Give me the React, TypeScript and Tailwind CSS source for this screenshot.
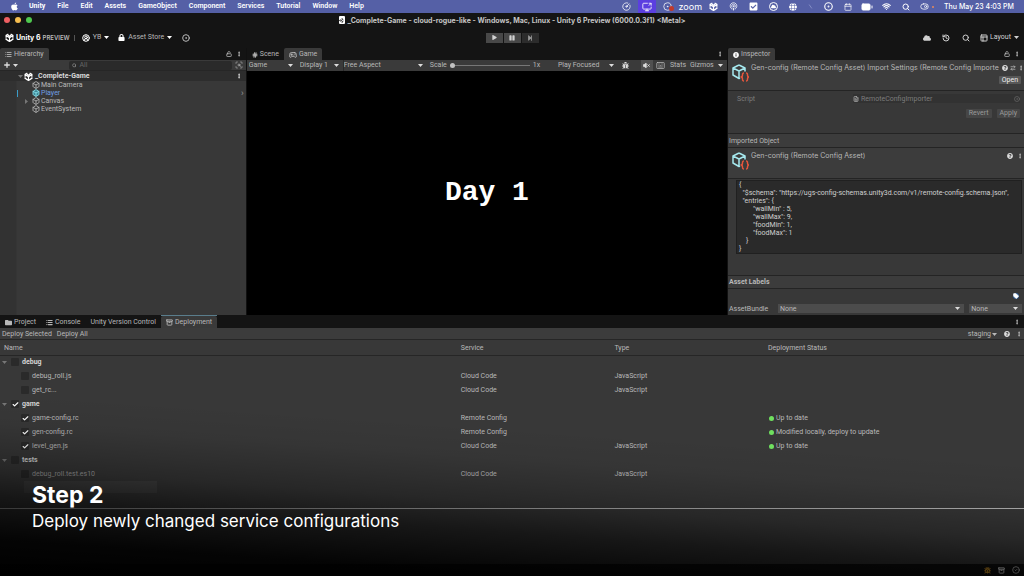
import React, { useState } from 'react';
import {
    Archive, BatteryMedium, Box, Bug, Calendar, Check, CircleDot, CircleUserRound, CircleCheck,
    CircleGauge, EllipsisVertical, FileText, Gamepad2, Hash, History, Keyboard,
    List, LockOpen, PanelsTopLeft, Plus, Podcast, ScanSearch, ScreenShare, Search, ArrowRightLeft,
    Tag, ToggleRight, VolumeX, Wifi,
} from 'lucide-react';
import { FaApple, FaUnity, FaCloud, FaGlobe, FaFolder, FaLock, FaPlay, FaPause, FaStepForward, FaBug, FaExclamationCircle, FaQuestionCircle, FaCheckSquare } from 'react-icons/fa';

const MENUS = ['File', 'Edit', 'Assets', 'GameObject', 'Component', 'Services', 'Tutorial', 'Window', 'Help'];

const CONFIG_JSON = `{
  "$schema": "https://ugs-config-schemas.unity3d.com/v1/remote-config.schema.json",
  "entries": {
        "wallMin" : 5,
        "wallMax": 9,
        "foodMin": 1,
        "foodMax": 1
    }
}`;

interface DeployItem {
    name: string;
    service: string;
    type?: string;
    status?: string;
    checked?: boolean;
    dim?: boolean;
}

interface DeployGroup {
    name: string;
    checked?: boolean;
    items: DeployItem[];
}

const GROUPS: DeployGroup[] = [
    {
        name: 'debug',
        items: [
            { name: 'debug_roll.js', service: 'Cloud Code', type: 'JavaScript' },
            { name: 'get_rc...', service: 'Cloud Code', type: 'JavaScript' },
        ],
    },
    {
        name: 'game',
        checked: true,
        items: [
            { name: 'game-config.rc', service: 'Remote Config', status: 'Up to date', checked: true },
            { name: 'gen-config.rc', service: 'Remote Config', status: 'Modified locally, deploy to update', checked: true },
            { name: 'level_gen.js', service: 'Cloud Code', type: 'JavaScript', status: 'Up to date', checked: true },
        ],
    },
    {
        name: 'tests',
        items: [{ name: 'debug_roll.test.es10', service: 'Cloud Code', type: 'JavaScript', dim: true }],
    },
];

const Caret: React.FC<{ className?: string }> = ({ className = '' }) => (
    <svg viewBox="0 0 10 6" className={`h-[3px] w-[5px] shrink-0 ${className}`} fill="currentColor" aria-hidden="true">
        <path d="M0 0h10L5 6z" />
    </svg>
);

const MoreButton: React.FC<{ label: string }> = ({ label }) => (
    <button aria-label={label} className="flex w-1.5 shrink-0 justify-center">
        <EllipsisVertical size={8} strokeWidth={4} />
    </button>
);

const DropDown: React.FC<{ label: string; value: string; className?: string }> = ({ label, value, className = '' }) => (
    <span className={`relative flex items-center ${className}`}>
        <select aria-label={label} className="h-full w-full appearance-none pr-2">
            <option>{value}</option>
        </select>
        <Caret className="pointer-events-none absolute right-1 text-[#ddd]" />
    </span>
);

const CheckBox: React.FC<{ id: string; label: string; initial?: boolean }> = ({ id, label, initial = false }) => {
    const [checked, setChecked] = useState(initial);
    return (
        <span className="relative h-2 w-2 shrink-0">
            <input
                id={id}
                type="checkbox"
                aria-label={label}
                checked={checked}
                onChange={() => setChecked(!checked)}
                className="block h-2 w-2 appearance-none rounded-[1px] bg-[#2a2a2a]"
            />
            {checked && <Check size={7} strokeWidth={4} className="pointer-events-none absolute left-px top-px text-white" />}
        </span>
    );
};

// Cube with braces, used for every remote config asset
const ConfigIcon: React.FC = () => (
    <svg viewBox="0 0 34 36" className="mt-1 h-[18px] w-[17px] shrink-0" fill="none" aria-hidden="true">
        <path d="M14 2 26 8v7M14 2 2 8v14l12 7 2-1M2 8l12 6 12-6M14 14v14" stroke="#a5e8ee" strokeWidth="3" strokeLinejoin="round" />
        <path d="M24 18c-3 0-3 1-3 4s0 3-2 4c2 1 2 1 2 4s0 4 3 4M28 18c3 0 3 1 3 4s0 3 2 4c-2 1-2 1-2 4s0 4-3 4" stroke="#e8563c" strokeWidth="3" />
    </svg>
);

// The Unity mark: a cube seen from its corner, with arrow-shaped gaps
const UnityMark: React.FC<{ className?: string }> = ({ className = '' }) => (
    <svg viewBox="0 0 24 24" className={`size-[9px] shrink-0 ${className}`} fill="none" stroke="currentColor" strokeWidth="3.4" aria-hidden="true">
        <path d="M9 3 3 6.500v6M15 3l6 3.500v6M6 19l6 3.500 6-3.500M12 12.500V21M12 12.500 4.500 8M12 12.500 19.500 8M8 6l4 2.500L16 6M3 14v3l4 2M21 14v3l-4 2" />
    </svg>
);

const MenuBar: React.FC = () => (
    <header className="flex h-[13px] items-center bg-[#5560a6] pl-[10px] pr-[10px] text-white">
        <FaApple size={9} />
        <nav className="ml-[10px] flex gap-3 font-semibold">
            <button className="font-bold">Unity</button>
            {MENUS.map(menu => <button key={menu}>{menu}</button>)}
        </nav>
        <div className="ml-auto flex items-center gap-[11px]">
            <CircleGauge size={9} />
            <span className="-mx-1 flex h-[13px] w-[18px] items-center justify-center bg-[#5b3fe0]"><ScreenShare size={10} /></span>
            <span className="relative">
                <CircleDot size={9} />
                <span className="absolute -right-0.5 bottom-0 h-[5px] w-[5px] rounded-full bg-[#c0392b]" />
            </span>
            <span className="-mx-1 font-[Inter,sans-serif] text-[9px]">zoom</span>
            <UnityMark />
            <Podcast size={9} />
            <FaCheckSquare size={9} />
            <span className="flex size-[9px] items-center justify-center rounded-full border border-white"><FaCloud size={5} /></span>
            <FaGlobe size={8} />
            <svg viewBox="0 0 9 9" className="size-[5px]" stroke="#a9b0dd" aria-hidden="true"><path d="m2 1 5 7" /></svg>
            <CircleDot size={9} strokeWidth={3} />
            <Calendar size={8} />
            <BatteryMedium size={12} fill="currentColor" className="-mx-0.5" />
            <Wifi size={9} strokeWidth={3} />
            <Search size={8} strokeWidth={3} />
            <span className="-mx-px flex items-center gap-[3px]">
                <ToggleRight size={9} />
                <span className="h-[2px] w-[2px] rounded-full bg-[#e88a5a]" />
            </span>
            <time className="font-[Inter,sans-serif] font-medium whitespace-nowrap">Thu May 23 4:03 PM</time>
        </div>
    </header>
);

const TitleBar: React.FC = () => (
    <div className="grid h-[14px] grid-cols-[1fr_auto_1fr] items-center px-1">
        <div className="flex gap-[5px]">
            <button aria-label="Close" className="size-1.5 rounded-full bg-[#ee5f62]" />
            <button aria-label="Minimize" className="size-1.5 rounded-full bg-[#f4bd4f]" />
            <button aria-label="Zoom" className="size-1.5 rounded-full bg-[#4fc94f]" />
        </div>
        <h1 className="flex items-center gap-[3px] font-[Inter,sans-serif] font-bold text-[#c4c4c4]">
            <span className="flex h-2 w-1.5 items-center justify-center rounded-[1px] bg-white text-black"><FaUnity size={5} /></span>
            _Complete-Game - cloud-rogue-like - Windows, Mac, Linux - Unity 6 Preview (6000.0.3f1) &lt;Metal&gt;
        </h1>
    </div>
);

const MainToolbar: React.FC = () => (
    <div className="grid h-[21px] grid-cols-[1fr_auto_1fr] items-center px-[5px]">
        <div className="flex items-center">
            <UnityMark className="text-white" />
            <span className="ml-[2px] font-[Inter,sans-serif] font-bold text-white">Unity 6</span>
            <span className="ml-[2px] font-[Inter,sans-serif] text-[6px] font-semibold">PREVIEW</span>
            <span className="ml-1 h-1.5 w-px bg-[#555]" />
            <button className="ml-[7px] flex items-center gap-[3px]">
                <CircleUserRound size={8} strokeWidth={3} className="text-white" /> YB <Caret className="text-white" />
            </button>
            <button className="ml-[9px] flex items-center gap-[3px]">
                <FaLock size={7} className="text-white" /> Asset Store <Caret className="text-white" />
            </button>
            <button aria-label="Settings" className="ml-[10px]"><CircleDot size={8} strokeWidth={3} /></button>
        </div>
        <div className="flex gap-px text-[#d2d2d2]">
            <button aria-label="Play" className="flex h-[10px] w-[17px] items-center justify-center bg-[#484848]"><FaPlay size={5} /></button>
            <button aria-label="Pause" className="flex h-[10px] w-[17px] items-center justify-center bg-[#484848]"><FaPause size={6} /></button>
            <button aria-label="Step" className="flex h-[10px] w-[17px] items-center justify-center bg-[#2c2c2c] text-[#999]"><FaStepForward size={6} /></button>
        </div>
        <div className="flex items-center justify-end text-[#d0d0d0]">
            <button aria-label="Cloud services"><FaCloud size={8} /></button>
            <button aria-label="History" className="ml-[11px]"><History size={8} strokeWidth={3} /></button>
            <button aria-label="Search" className="ml-3"><Search size={8} strokeWidth={3} /></button>
            <button className="ml-[10px] flex items-center gap-[2px]">
                <PanelsTopLeft size={8} strokeWidth={3} /> Layout <Caret className="ml-px" />
            </button>
        </div>
    </div>
);

const Tab: React.FC<{ icon?: React.ReactNode; label: string; active?: boolean }> = ({ icon, label, active }) => (
    <button
        role="tab"
        aria-selected={!!active}
        className={`flex h-full items-center gap-[2px] rounded-t-[2px] px-[5px] pt-px whitespace-nowrap ${active ? 'bg-[#3a3a3a]' : ''}`}
    >
        {icon}
        {label}
    </button>
);

const SceneItem: React.FC<{ label: string; active?: boolean; parent?: boolean }> = ({ label, active, parent }) => (
    <li className={`flex h-2 items-center pr-[2px] ${active ? 'text-[#6f9de0]' : ''}`}>
        <span className={`ml-[17px] h-[7px] w-px ${active ? 'bg-[#3a9cc8]' : ''}`} />
        <span className="flex w-[14px] justify-end pr-[3px]">{parent && <Caret className="-rotate-90 text-[#777]" />}</span>
        <Box size={8} strokeWidth={2.5} className={active ? 'fill-[#3f8796] text-[#8be6f0]' : ''} />
        <span className="ml-px">{label}</span>
        {active && <span className="ml-auto text-[9px] leading-2 text-[#999]">›</span>}
    </li>
);

const Hierarchy: React.FC = () => (
    <section className="flex w-[24%] flex-col">
        <div className="flex h-3 items-center justify-between pr-1">
            <Tab icon={<List size={7} strokeWidth={3} />} label="Hierarchy" active />
            <div className="flex items-center gap-1">
                <LockOpen size={6} strokeWidth={3} />
                <MoreButton label="Hierarchy options" />
            </div>
        </div>
        <div className="flex h-[11px] items-center border-b border-[#262626] bg-[#3a3a3a] px-[3px]">
            <button aria-label="Create" className="flex items-center gap-[2px] text-[#ddd]"><Plus size={8} strokeWidth={4} /><Caret /></button>
            <label className="ml-auto flex h-[9px] w-[68%] items-center gap-[3px] rounded-[2px] bg-[#2a2a2a] px-[3px] text-[#999]">
                <Search size={5} strokeWidth={3} />
                <input aria-label="Search hierarchy" placeholder="All" className="w-full placeholder:text-[#666]" />
            </label>
            <ScanSearch size={8} className="ml-[3px]" />
        </div>
        <div className="flex-1 bg-[linear-gradient(90deg,#323232_16px,#383838_17px)]">
            <div className="flex h-[10px] items-center bg-[#2d2d2d] pl-[18px] pr-1 font-bold text-[#dadada]">
                <Caret className="text-[#777]" />
                <UnityMark className="ml-px text-white" />
                <span className="ml-[2px]">_Complete-Game</span>
                <span className="ml-auto"><MoreButton label="Scene options" /></span>
            </div>
            <ul>
                <SceneItem label="Main Camera" />
                <SceneItem label="Player" active />
                <SceneItem label="Canvas" parent />
                <SceneItem label="EventSystem" />
            </ul>
        </div>
    </section>
);

const GameView: React.FC = () => (
    <section className="flex min-w-0 flex-1 flex-col border-l border-[#111]">
        <div className="flex h-3 items-center pr-1">
            <Tab icon={<Hash size={6} strokeWidth={4} />} label="Scene" />
            <Tab icon={<Gamepad2 size={8} strokeWidth={3} />} label="Game" active />
            <span className="ml-auto"><MoreButton label="Game view options" /></span>
        </div>
        <div className="flex h-[11px] items-center bg-[#3a3a3a]">
            <DropDown label="View" value="Game" className="h-full w-[50px] pl-[2px]" />
            <DropDown label="Display" value="Display 1" className="h-full w-[46px] pl-[3px]" />
            <DropDown label="Aspect" value="Free Aspect" className="h-full w-[84px] border-l border-[#2a2a2a]" />
            <label htmlFor="scale" className="ml-[3px]">Scale</label>
            <input
                id="scale"
                type="range"
                min={1}
                max={5}
                defaultValue={1}
                className="ml-[3px] h-px w-20 appearance-none bg-[#777] [&::-webkit-slider-thumb]:size-[5px] [&::-webkit-slider-thumb]:appearance-none [&::-webkit-slider-thumb]:rounded-full [&::-webkit-slider-thumb]:bg-[#c0c0c0]"
            />
            <span className="ml-[3px]">1x</span>
            <DropDown label="Play mode" value="Play Focused" className="ml-auto h-full w-[64px] pl-1" />
            <button aria-label="Frame debugger" className="px-1"><FaBug size={7} className="text-[#ddd]" /></button>
            <button aria-label="Mute audio" className="ml-2 flex h-full w-3 items-center justify-center bg-[#505050] text-[#ddd]"><VolumeX size={7} fill="currentColor" strokeWidth={3} /></button>
            <button aria-label="Shortcuts" className="flex h-full w-4 items-center justify-center"><Keyboard size={9} /></button>
            <button className="ml-px">Stats</button>
            <DropDown label="Gizmos" value="Gizmos" className="ml-1 h-full w-[37px]" />
        </div>
        <div className="flex flex-1 items-center justify-center bg-black">
            <p className="font-['Liberation_Mono',monospace] text-[28px] leading-7 font-bold text-white">Day 1</p>
        </div>
    </section>
);

const Inspector: React.FC = () => (
    <aside className="w-[29%] border-l border-[#111]">
        <div className="flex h-3 items-center justify-between pr-1">
            <Tab icon={<FaExclamationCircle size={6} className="rotate-180 text-white" />} label="Inspector" active />
            <div className="flex items-center gap-1">
                <LockOpen size={6} strokeWidth={3} />
                <MoreButton label="Inspector options" />
            </div>
        </div>
        <div className="bg-[#383838]">
            <div className="flex h-[31px] gap-[2px] border-b border-[#242424] bg-[#3c3c3c] pl-1">
                <ConfigIcon />
                <div className="min-w-0 flex-1 pt-[3px]">
                    <div className="flex items-center gap-[2px]">
                        <h2 className="flex-1 font-[Inter,sans-serif] whitespace-nowrap">Gen-config (Remote Config Asset) Import Settings (Remote Config Importe</h2>
                        <FaQuestionCircle size={6} className="shrink-0 text-[#ddd]" />
                        <ArrowRightLeft size={6} strokeWidth={3} className="shrink-0" />
                        <MoreButton label="Importer options" />
                    </div>
                    <div className="mt-1 flex justify-end pr-[3px]">
                        <button className="h-2 rounded-[1px] bg-[#585858] px-[3px] leading-2 text-[#eee]">Open</button>
                    </div>
                </div>
            </div>
            <div className="pt-[3px] pr-1 pl-[9px] text-[#7c7c7c]">
                <div className="flex h-[9px] items-center leading-[10px]">
                    <span className="w-[41%]">Script</span>
                    <span className="flex h-full flex-1 items-center gap-[2px] bg-[#323232]">
                        <FileText size={6} strokeWidth={3} className="text-[#aaa]" />
                        RemoteConfigImporter
                        <CircleDot size={6} className="ml-auto" />
                    </span>
                </div>
                <div className="mt-1.5 flex justify-end gap-[5px] pb-[15px] text-[#9a9a9a]">
                    <button className="h-[9px] rounded-[1px] bg-[#464646] px-[3px]">Revert</button>
                    <button className="h-[9px] rounded-[1px] bg-[#464646] px-[3px]">Apply</button>
                </div>
            </div>
            <h3 className="flex h-[15px] items-center border-y border-[#242424] bg-[#3c3c3c] pt-px pl-px">Imported Object</h3>
            <div className="flex h-[31px] gap-[2px] border-b border-[#242424] bg-[#3c3c3c] pl-1">
                <ConfigIcon />
                <div className="flex h-[15px] flex-1 items-center gap-1 pr-px">
                    <h2 className="flex-1 font-[Inter,sans-serif]">Gen-config (Remote Config Asset)</h2>
                    <FaQuestionCircle size={6} className="text-[#ddd]" />
                    <MoreButton label="Asset options" />
                </div>
            </div>
            <div className="pt-px pr-[2px] pb-[21px] pl-2">
                <textarea
                    aria-label="Config contents"
                    readOnly
                    rows={9}
                    value={CONFIG_JSON}
                    className="block w-full resize-none overflow-hidden whitespace-pre border border-[#202020] bg-[#2a2a2a] px-[2px] leading-2 text-[#d0d0d0]"
                />
            </div>
            <h3 className="flex h-[14px] items-center border-y border-[#242424] bg-[#3c3c3c] pt-px pl-px font-bold">Asset Labels</h3>
            <div className="flex h-[14px] items-center justify-end pr-[5px]">
                <button aria-label="Add label" className="rounded-full bg-[#2c5a94] text-white"><Tag size={6} fill="currentColor" /></button>
            </div>
            <div className="flex h-3 items-center gap-[5px] pr-[2px] pb-px pl-px leading-[10px]">
                <span className="w-[15%]">AssetBundle</span>
                <DropDown label="Asset bundle" value="None" className="h-[9px] flex-1 bg-[#4c4c4c] pl-[2px]" />
                <DropDown label="Asset bundle variant" value="None" className="h-[9px] w-[18%] bg-[#4c4c4c] pl-[2px]" />
            </div>
        </div>
    </aside>
);

const DeploymentTable: React.FC = () => (
    <table className="w-full table-fixed text-left">
        <thead>
            <tr className="h-[15px] border-b border-[#262626]">
                <th className="w-[45%] pt-[3px] pl-1 font-normal">Name</th>
                <th className="w-[15%] pt-[3px] font-normal">Service</th>
                <th className="w-[15%] pt-[3px] font-normal">Type</th>
                <th className="w-[25%] pt-[3px] font-normal">Deployment Status</th>
            </tr>
        </thead>
        {GROUPS.map(group => (
            <tbody key={group.name}>
                <tr className="h-[14px]">
                    <td colSpan={4}>
                        <div className="flex items-center pl-[2px] font-bold text-[#d6d6d6]">
                            <Caret className="text-[#777]" />
                            <span className="ml-1 flex"><CheckBox id={group.name} label={group.name} initial={group.checked} /></span>
                            <label htmlFor={group.name} className="ml-[3px]">{group.name}</label>
                        </div>
                    </td>
                </tr>
                {group.items.map(item => (
                    <tr key={item.name} className="h-[14px]">
                        <td>
                            <div className={`flex items-center gap-[3px] pl-[21px] ${item.dim ? 'text-[#a0a0a0]' : ''}`}>
                                <CheckBox id={item.name} label={item.name} initial={item.checked} />
                                <label htmlFor={item.name}>{item.name}</label>
                            </div>
                        </td>
                        <td>{item.service}</td>
                        <td>{item.type}</td>
                        <td>
                            {item.status && (
                                <span className="flex items-center gap-[2px] pt-px pl-px">
                                    <span className="size-[5px] rounded-full bg-[#6fe05f]" />
                                    {item.status}
                                </span>
                            )}
                        </td>
                    </tr>
                ))}
            </tbody>
        ))}
    </table>
);

const Deployment: React.FC = () => (
    <section className="flex flex-1 flex-col bg-[#383838]">
        <div className="flex h-[13px] items-center bg-[#141414] pr-1">
            <Tab icon={<FaFolder size={7} />} label="Project" />
            <Tab icon={<List size={7} strokeWidth={4} />} label="Console" />
            <Tab label="Unity Version Control" />
            <span className="h-full border-t border-[#5a7d8c]"><Tab icon={<Archive size={7} strokeWidth={3} />} label="Deployment" active /></span>
            <span className="ml-auto"><MoreButton label="Panel options" /></span>
        </div>
        <div className="flex h-3 items-center border-b border-[#262626] bg-[#3c3c3c] pt-px pr-[2px] pl-[2px]">
            <button>Deploy Selected</button>
            <button className="ml-[5px]">Deploy All</button>
            <button className="ml-auto flex items-center gap-px">staging<Caret /></button>
            <FaQuestionCircle size={6} className="ml-[7px] text-[#ddd]" />
            <span className="ml-1.5"><MoreButton label="Deployment options" /></span>
        </div>
        <DeploymentTable />
        <div className="mb-[15px] ml-6 h-3 w-[13%] bg-white/5" />
        <div className="flex-1 border-t border-[#b8b8b8]" />
    </section>
);

const StatusBar: React.FC = () => (
    <footer className="flex h-3 items-center justify-end gap-[7px] bg-[#101010] pr-1 text-white">
        <Bug size={7} strokeWidth={3} className="text-[#ffb52c]" />
        <Archive size={7} strokeWidth={3} />
        <CircleCheck size={8} />
    </footer>
);

const App: React.FC = () => (
    <main className="relative flex min-h-screen flex-col overflow-hidden bg-[#141414] font-[Roboto,sans-serif] text-[7px] leading-[9px] text-[#b8b8b8]">
        <MenuBar />
        <TitleBar />
        <MainToolbar />
        <div className="flex">
            <Hierarchy />
            <GameView />
            <Inspector />
        </div>
        <Deployment />
        <StatusBar />

        {/* Step caption over the lower part of the editor */}
        <div className="pointer-events-none absolute inset-x-0 bottom-0 h-44 bg-[linear-gradient(184deg,transparent_25%,rgba(0,0,0,0.05)_38%,rgba(0,0,0,0.18)_48%,rgba(0,0,0,0.3)_56%,rgba(0,0,0,0.6)_68%,rgba(0,0,0,0.92)_85%,#000_100%)] px-8 pt-[81px] text-white">
            <h2 className="font-[Inter,sans-serif] text-[23px] leading-7 font-bold">Step 2</h2>
            <p className="font-[Inter,sans-serif] text-[17px] leading-6">Deploy newly changed service configurations</p>
        </div>
    </main>
);

export default App;
